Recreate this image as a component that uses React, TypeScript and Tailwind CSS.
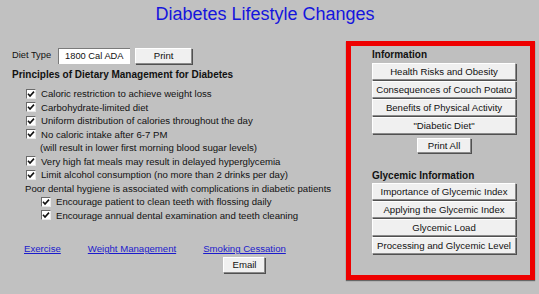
import React from "react";

function Check() {
  return (
    <span className="flex h-[10px] w-[10px] shrink-0 items-center justify-center border-t border-l border-t-[#6a6a6a] border-l-[#6a6a6a] border-b border-r border-b-[#e8e8e8] border-r-[#e8e8e8] bg-white">
      <svg viewBox="0 0 8 8" className="h-[8px] w-[8px]">
        <path d="M1 3.8 L3 6 L7 1.6" fill="none" stroke="#111" strokeWidth="1.6" />
      </svg>
    </span>
  );
}

function CheckRow({ text, indent = false }: { text: string; indent?: boolean }) {
  return (
    <div className={`flex h-[13.5px] items-center gap-[5px] whitespace-nowrap ${indent ? "pl-[29px]" : "pl-[14px]"}`}>
      <Check />
      <span>{text}</span>
    </div>
  );
}

function Btn({ label, className = "" }: { label: string; className?: string }) {
  return (
    <button
      className={`flex items-center justify-center whitespace-nowrap border border-t-white border-l-white border-b-[#8a8a8a] border-r-[#8a8a8a] bg-[#f0f0f0] text-[9.6px] leading-none text-[#111] shadow-[1px_1px_0_#505050] ${className}`}
    >
      {label}
    </button>
  );
}

const principles = [
  "Caloric restriction to achieve weight loss",
  "Carbohydrate-limited diet",
  "Uniform distribution of calories throughout the day",
  "No caloric intake after 6-7 PM",
];

const info = [
  "Health Risks and Obesity",
  "Consequences of Couch Potato",
  "Benefits of Physical Activity",
  "\"Diabetic Diet\"",
];

const glycemic = [
  "Importance of Glycemic Index",
  "Applying the Glycemic Index",
  "Glycemic Load",
  "Processing and Glycemic Level",
];

export default function App() {
  return (
    <div
      className="h-[294px] w-[539px] overflow-hidden bg-[#c1c1c1] text-[#111]"
      style={{ fontFamily: '"Liberation Sans", Arial, sans-serif' }}
    >
      <div className="flex h-[26px] items-center justify-center pr-[9px] pt-[1px] text-[18px] leading-[22px] text-[#1515dd]">
        Diabetes Lifestyle Changes
      </div>

      <div className="flex">
        <div className="w-[346px] shrink-0 pl-[12px] pt-[22px] text-[9.6px] leading-[13.5px]">
          <div className="flex h-[16px] items-center">
            <span className="text-[9.3px]">Diet Type</span>
            <div className="ml-[7px] flex h-[16px] w-[72px] items-center border-t border-l border-t-[#7a7a7a] border-l-[#7a7a7a] bg-white pl-[6px] text-[9.3px]">
              1800 Cal ADA
            </div>
            <Btn label="Print" className="ml-[5px] h-[16px] w-[57px]" />
          </div>

          <div className="mt-[5px] whitespace-nowrap text-[10px] font-bold leading-[12px]">
            Principles of Dietary Management for Diabetes
          </div>

          <div className="mt-[6px]">
            {principles.map((p) => (
              <CheckRow key={p} text={p} />
            ))}
            <div className="h-[13.5px] whitespace-nowrap pl-[28px]">
              (will result in lower first morning blood sugar levels)
            </div>
            <CheckRow text="Very high fat meals may result in delayed hyperglycemia" />
            <CheckRow text="Limit alcohol consumption (no more than 2 drinks per day)" />
            <div className="h-[13.5px] whitespace-nowrap pl-[13px]">
              Poor dental hygiene is associated with complications in diabetic patients
            </div>
            <CheckRow indent text="Encourage patient to clean teeth with flossing daily" />
            <CheckRow indent text="Encourage annual dental examination and teeth cleaning" />
          </div>

          <div className="mt-[21px] flex items-start gap-[27px] pl-[12px] leading-[12px]">
            <a href="#" className="text-[#1b1bcc] underline">Exercise</a>
            <a href="#" className="text-[#1b1bcc] underline">Weight Management</a>
            <div className="flex flex-col items-center">
              <a href="#" className="text-[#1b1bcc] underline">Smoking Cessation</a>
              <Btn label="Email" className="mt-[2px] h-[16px] w-[42px]" />
            </div>
          </div>
        </div>

        <div className="mt-[15px] h-[239px] w-[189px] shrink-0 border-[5px] border-[#ee0000] bg-[#bfbfbf] pl-[21px] pr-[14px] pt-[3px] shadow-[0_1px_1px_#666]">
          <div className="text-[10px] font-bold leading-[12px]">Information</div>
          <div className="mt-[2px] flex flex-col gap-[1px]">
            {info.map((l) => (
              <Btn key={l} label={l} className="h-[17px] w-[144px]" />
            ))}
          </div>
          <div className="mt-[4px] flex justify-center">
            <Btn label="Print All" className="h-[15px] w-[54px]" />
          </div>

          <div className="mt-[17px] text-[10px] font-bold leading-[12px]">Glycemic Information</div>
          <div className="mt-[1px] flex flex-col gap-[1px]">
            {glycemic.map((l) => (
              <Btn key={l} label={l} className="h-[17px] w-[144px]" />
            ))}
          </div>
        </div>
      </div>
    </div>
  );
}
